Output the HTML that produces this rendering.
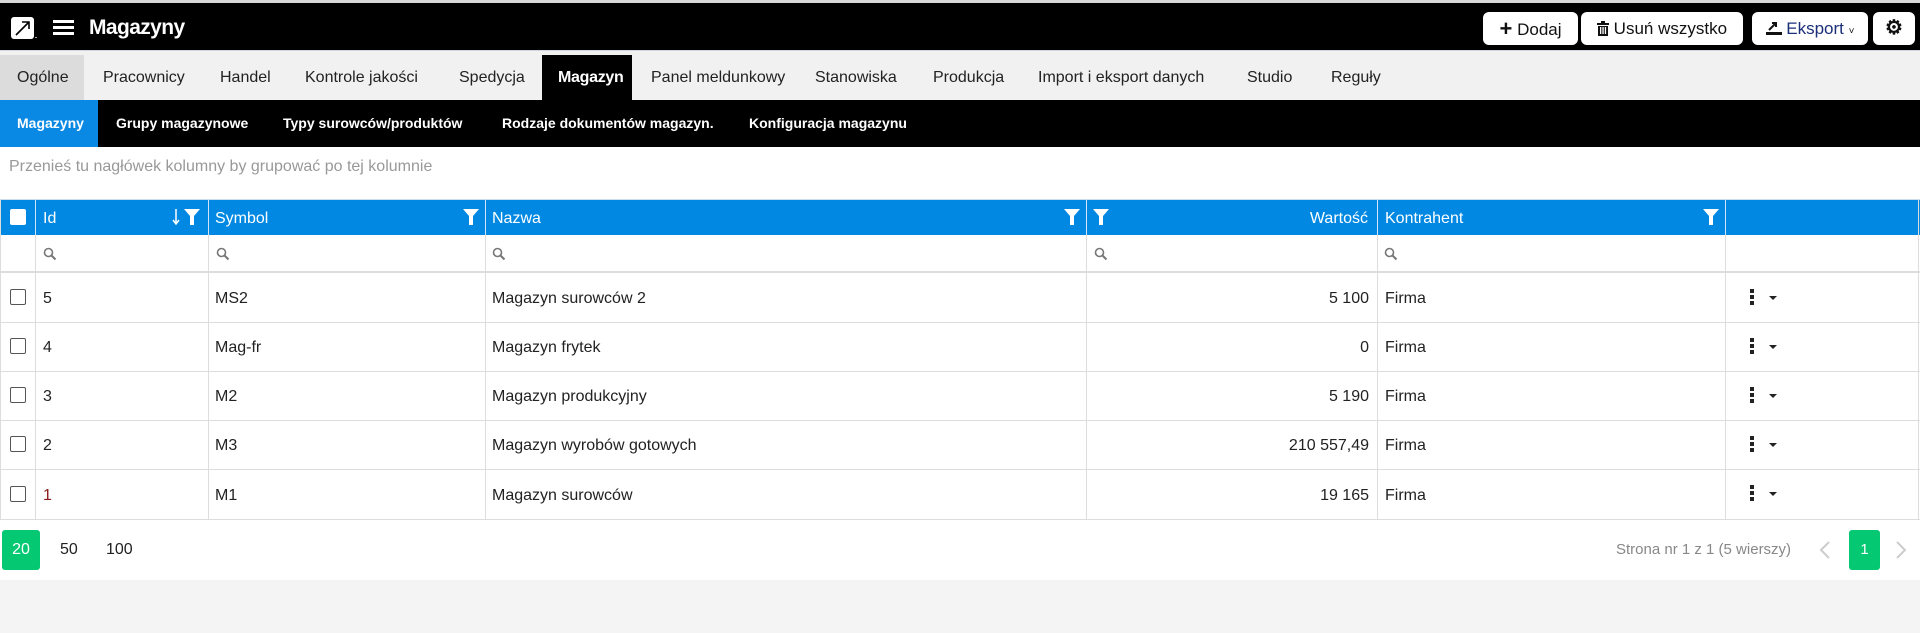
<!DOCTYPE html>
<html><head><meta charset="utf-8">
<style>
*{margin:0;padding:0;box-sizing:border-box}
body{width:1920px;height:633px;background:#f4f4f4;font-family:"Liberation Sans",sans-serif;position:relative;overflow:hidden}
.a{position:absolute;white-space:nowrap}
#top{left:0;top:0;width:1920px;height:3px;background:#d8d8d8}
#hdr{left:0;top:3px;width:1920px;height:47px;background:#000}
#tabs{left:0;top:50px;width:1920px;height:50px;background:#f1f1f1;border-top:1px solid #cfd8e0}
#sub{left:0;top:100px;width:1920px;height:47px;background:#000}
#main{left:0;top:147px;width:1920px;height:433px;background:#fff}
.tab{top:55px;height:45px;line-height:45px;font-size:16px;letter-spacing:0px;color:#222}
.st{top:100px;height:47px;line-height:46px;font-size:14px;font-weight:bold;color:#fff}
.btn{top:12px;height:33px;background:#fff;border-radius:6px;font-size:17px;line-height:33px;color:#111;text-align:center}
.vl{position:absolute;width:1px;background:#ddd}
.hl{position:absolute;left:0;width:1920px;height:1px;background:#ddd}
.hd{top:200px;height:36px;line-height:37px;color:#fff;font-size:16px}
.cell{font-size:16px;color:#222;line-height:20px}
.cb{position:absolute;left:10px;width:16px;height:16px;border:1px solid #555;border-radius:2px;background:#fff}
.srch{position:absolute;top:247px}
</style></head><body>
<div class="a" id="top"></div>
<div class="a" id="hdr"></div>
<div class="a" style="left:11px;top:17px;width:23px;height:22px;background:#fff;border-radius:3px"></div>
<svg class="a" style="left:11px;top:17px" width="26" height="24"><path d="M5 18 L18 5 M11 5 H18 V12" stroke="#000" stroke-width="1.6" fill="none"/><rect x="24" y="20" width="2" height="1" fill="#aaa"/></svg>
<div class="a" style="left:53px;top:20px;width:21px;height:3px;background:#fff"></div>
<div class="a" style="left:53px;top:26px;width:21px;height:3px;background:#fff"></div>
<div class="a" style="left:53px;top:32px;width:21px;height:3px;background:#fff"></div>
<div class="a" style="left:89px;top:11px;font-size:21px;letter-spacing:-0.6px;font-weight:bold;color:#fff;line-height:34px">Magazyny</div>

<div class="a btn" style="left:1483px;width:95px"><b style="font-size:22px;vertical-align:-1px">+</b> Dodaj</div>
<div class="a btn" style="left:1581px;width:162px"><svg width="12" height="15" style="vertical-align:-2px"><rect x="0" y="2" width="12" height="2" fill="#111"/><rect x="4" y="0" width="4" height="2" fill="#111"/><rect x="1" y="5" width="10" height="10" fill="#111"/><rect x="3" y="6" width="1.3" height="7" fill="#fff"/><rect x="5.4" y="6" width="1.3" height="7" fill="#fff"/><rect x="7.8" y="6" width="1.3" height="7" fill="#fff"/></svg> Usuń wszystko</div>
<div class="a btn" style="left:1752px;width:116px;color:#1b2f7a"><svg width="16" height="16" style="vertical-align:-2px"><rect x="0" y="12" width="16" height="3" fill="#111"/><path d="M3 10 L10 3 M6 3 H10 V7" stroke="#111" stroke-width="2" fill="none"/></svg> Eksport <span style="font-size:10px;color:#111">˅</span></div>
<div class="a btn" style="left:1873px;width:42px;font-size:20px;font-weight:bold">⚙</div>

<div class="a" id="tabs"></div>
<div class="a" style="left:0;top:55px;width:84px;height:45px;background:#dcdcdc"></div>
<div class="a" style="left:542px;top:55px;width:90px;height:45px;background:#000"></div>
<div class="a tab" style="left:17px">Ogólne</div>
<div class="a tab" style="left:103px">Pracownicy</div>
<div class="a tab" style="left:220px">Handel</div>
<div class="a tab" style="left:305px">Kontrole jakości</div>
<div class="a tab" style="left:459px">Spedycja</div>
<div class="a tab" style="left:558px;color:#fff;font-weight:bold;letter-spacing:-0.3px">Magazyn</div>
<div class="a tab" style="left:651px">Panel meldunkowy</div>
<div class="a tab" style="left:815px">Stanowiska</div>
<div class="a tab" style="left:933px">Produkcja</div>
<div class="a tab" style="left:1038px">Import i eksport danych</div>
<div class="a tab" style="left:1247px">Studio</div>
<div class="a tab" style="left:1331px">Reguły</div>

<div class="a" id="sub"></div>
<div class="a" style="left:0;top:100px;width:98px;height:47px;background:#0a89e4"></div>
<div class="a st" style="left:17px">Magazyny</div>
<div class="a st" style="left:116px">Grupy magazynowe</div>
<div class="a st" style="left:283px">Typy surowców/produktów</div>
<div class="a st" style="left:502px">Rodzaje dokumentów magazyn.</div>
<div class="a st" style="left:749px">Konfiguracja magazynu</div>

<div class="a" id="main"></div>
<div class="a" style="left:9px;top:157px;font-size:16px;color:#999;line-height:20px">Przenieś tu nagłówek kolumny by grupować po tej kolumnie</div>

<div class="a" style="left:0;top:199px;width:1920px;height:36px;background:#0088e2;border-top:1px solid #cde"></div>
<div class="a" style="left:10px;top:209px;width:16px;height:16px;background:#fff;border-radius:2px"></div>
<div class="a hd" style="left:43px">Id</div>
<div class="a hd" style="left:215px">Symbol</div>
<div class="a hd" style="left:492px">Nazwa</div>
<div class="a hd" style="left:1200px;width:168px;text-align:right">Wartość</div>
<div class="a hd" style="left:1385px">Kontrahent</div>
<svg class="a" style="left:172px;top:208px" width="30" height="18"><path d="M4 1 V15 M1 12 L4 16 L7 12" stroke="#fff" stroke-width="1.5" fill="none"/><path d="M12 1 H28 L22 8 V17 H18 V8 Z" fill="#fff"/></svg>
<svg class="a" style="left:462px;top:208px" width="18" height="18"><path d="M1 1 H17 L11 8 V17 H7 V8 Z" fill="#fff"/></svg>
<svg class="a" style="left:1063px;top:208px" width="18" height="18"><path d="M1 1 H17 L11 8 V17 H7 V8 Z" fill="#fff"/></svg>
<svg class="a" style="left:1092px;top:208px" width="18" height="18"><path d="M1 1 H17 L11 8 V17 H7 V8 Z" fill="#fff"/></svg>
<svg class="a" style="left:1702px;top:208px" width="18" height="18"><path d="M1 1 H17 L11 8 V17 H7 V8 Z" fill="#fff"/></svg>

<div class="vl" style="left:35px;top:199px;height:321px"></div>
<div class="vl" style="left:208px;top:199px;height:321px"></div>
<div class="vl" style="left:485px;top:199px;height:321px"></div>
<div class="vl" style="left:1086px;top:199px;height:321px"></div>
<div class="vl" style="left:1377px;top:199px;height:321px"></div>
<div class="vl" style="left:1725px;top:199px;height:321px"></div>
<div class="vl" style="left:1918px;top:199px;height:321px"></div>
<div class="vl" style="left:0px;top:199px;height:321px"></div>
<div class="vl" style="left:35px;top:199px;height:36px;background:#cfe4f7"></div>
<div class="vl" style="left:208px;top:199px;height:36px;background:#cfe4f7"></div>
<div class="vl" style="left:485px;top:199px;height:36px;background:#cfe4f7"></div>
<div class="vl" style="left:1086px;top:199px;height:36px;background:#cfe4f7"></div>
<div class="vl" style="left:1377px;top:199px;height:36px;background:#cfe4f7"></div>
<div class="vl" style="left:1725px;top:199px;height:36px;background:#cfe4f7"></div>
<div class="hl" style="top:271px;height:2px"></div>
<div class="hl" style="top:322px"></div>
<div class="hl" style="top:371px"></div>
<div class="hl" style="top:420px"></div>
<div class="hl" style="top:469px"></div>
<div class="hl" style="top:519px"></div>

<svg class="srch" style="left:43px" width="14" height="14"><circle cx="5.5" cy="5.5" r="4" stroke="#777" stroke-width="1.6" fill="none"/><path d="M8.5 8.5 L12.5 12.5" stroke="#777" stroke-width="2"/></svg>
<svg class="srch" style="left:216px" width="14" height="14"><circle cx="5.5" cy="5.5" r="4" stroke="#777" stroke-width="1.6" fill="none"/><path d="M8.5 8.5 L12.5 12.5" stroke="#777" stroke-width="2"/></svg>
<svg class="srch" style="left:492px" width="14" height="14"><circle cx="5.5" cy="5.5" r="4" stroke="#777" stroke-width="1.6" fill="none"/><path d="M8.5 8.5 L12.5 12.5" stroke="#777" stroke-width="2"/></svg>
<svg class="srch" style="left:1094px" width="14" height="14"><circle cx="5.5" cy="5.5" r="4" stroke="#777" stroke-width="1.6" fill="none"/><path d="M8.5 8.5 L12.5 12.5" stroke="#777" stroke-width="2"/></svg>
<svg class="srch" style="left:1384px" width="14" height="14"><circle cx="5.5" cy="5.5" r="4" stroke="#777" stroke-width="1.6" fill="none"/><path d="M8.5 8.5 L12.5 12.5" stroke="#777" stroke-width="2"/></svg>

<div class="cb" style="top:289px"></div><div class="a cell" style="left:43px;top:289px">5</div><div class="a cell" style="left:215px;top:289px">MS2</div><div class="a cell" style="left:492px;top:289px">Magazyn surowców 2</div><div class="a cell" style="left:1200px;width:169px;text-align:right;top:289px">5 100</div><div class="a cell" style="left:1385px;top:289px">Firma</div>
<div class="cb" style="top:338px"></div><div class="a cell" style="left:43px;top:338px">4</div><div class="a cell" style="left:215px;top:338px">Mag-fr</div><div class="a cell" style="left:492px;top:338px">Magazyn frytek</div><div class="a cell" style="left:1200px;width:169px;text-align:right;top:338px">0</div><div class="a cell" style="left:1385px;top:338px">Firma</div>
<div class="cb" style="top:387px"></div><div class="a cell" style="left:43px;top:387px">3</div><div class="a cell" style="left:215px;top:387px">M2</div><div class="a cell" style="left:492px;top:387px">Magazyn produkcyjny</div><div class="a cell" style="left:1200px;width:169px;text-align:right;top:387px">5 190</div><div class="a cell" style="left:1385px;top:387px">Firma</div>
<div class="cb" style="top:436px"></div><div class="a cell" style="left:43px;top:436px">2</div><div class="a cell" style="left:215px;top:436px">M3</div><div class="a cell" style="left:492px;top:436px">Magazyn wyrobów gotowych</div><div class="a cell" style="left:1200px;width:169px;text-align:right;top:436px">210 557,49</div><div class="a cell" style="left:1385px;top:436px">Firma</div>
<div class="cb" style="top:486px"></div><div class="a cell" style="left:43px;top:486px;color:#8b1a1a">1</div><div class="a cell" style="left:215px;top:486px">M1</div><div class="a cell" style="left:492px;top:486px">Magazyn surowców</div><div class="a cell" style="left:1200px;width:169px;text-align:right;top:486px">19 165</div><div class="a cell" style="left:1385px;top:486px">Firma</div>

<svg class="a" style="left:1748px;top:289px" width="32" height="18"><rect x="2" y="0" width="4" height="4" fill="#222"/><rect x="2" y="6" width="4" height="4" fill="#222"/><rect x="2" y="12" width="4" height="4" fill="#222"/><path d="M21 7 H29 L25 11 Z" fill="#222"/></svg>
<svg class="a" style="left:1748px;top:338px" width="32" height="18"><rect x="2" y="0" width="4" height="4" fill="#222"/><rect x="2" y="6" width="4" height="4" fill="#222"/><rect x="2" y="12" width="4" height="4" fill="#222"/><path d="M21 7 H29 L25 11 Z" fill="#222"/></svg>
<svg class="a" style="left:1748px;top:387px" width="32" height="18"><rect x="2" y="0" width="4" height="4" fill="#222"/><rect x="2" y="6" width="4" height="4" fill="#222"/><rect x="2" y="12" width="4" height="4" fill="#222"/><path d="M21 7 H29 L25 11 Z" fill="#222"/></svg>
<svg class="a" style="left:1748px;top:436px" width="32" height="18"><rect x="2" y="0" width="4" height="4" fill="#222"/><rect x="2" y="6" width="4" height="4" fill="#222"/><rect x="2" y="12" width="4" height="4" fill="#222"/><path d="M21 7 H29 L25 11 Z" fill="#222"/></svg>
<svg class="a" style="left:1748px;top:485px" width="32" height="18"><rect x="2" y="0" width="4" height="4" fill="#222"/><rect x="2" y="6" width="4" height="4" fill="#222"/><rect x="2" y="12" width="4" height="4" fill="#222"/><path d="M21 7 H29 L25 11 Z" fill="#222"/></svg>

<div class="a" style="left:2px;top:530px;width:38px;height:40px;background:#05c872;border-radius:3px;color:#fff;font-size:16px;line-height:40px;text-align:center">20</div>
<div class="a cell" style="left:60px;top:540px">50</div>
<div class="a cell" style="left:106px;top:540px">100</div>
<div class="a" style="left:1616px;top:540px;font-size:15px;color:#888;line-height:20px">Strona nr 1 z 1 (5 wierszy)</div>
<svg class="a" style="left:1818px;top:540px" width="14" height="20"><path d="M11 2 L3 10 L11 18" stroke="#ccc" stroke-width="2" fill="none"/></svg>
<div class="a" style="left:1849px;top:530px;width:31px;height:40px;background:#05c872;border-radius:3px;color:#fff;font-size:15px;line-height:40px;text-align:center">1</div>
<svg class="a" style="left:1894px;top:540px" width="14" height="20"><path d="M3 2 L11 10 L3 18" stroke="#ccc" stroke-width="2" fill="none"/></svg>
</body></html>
